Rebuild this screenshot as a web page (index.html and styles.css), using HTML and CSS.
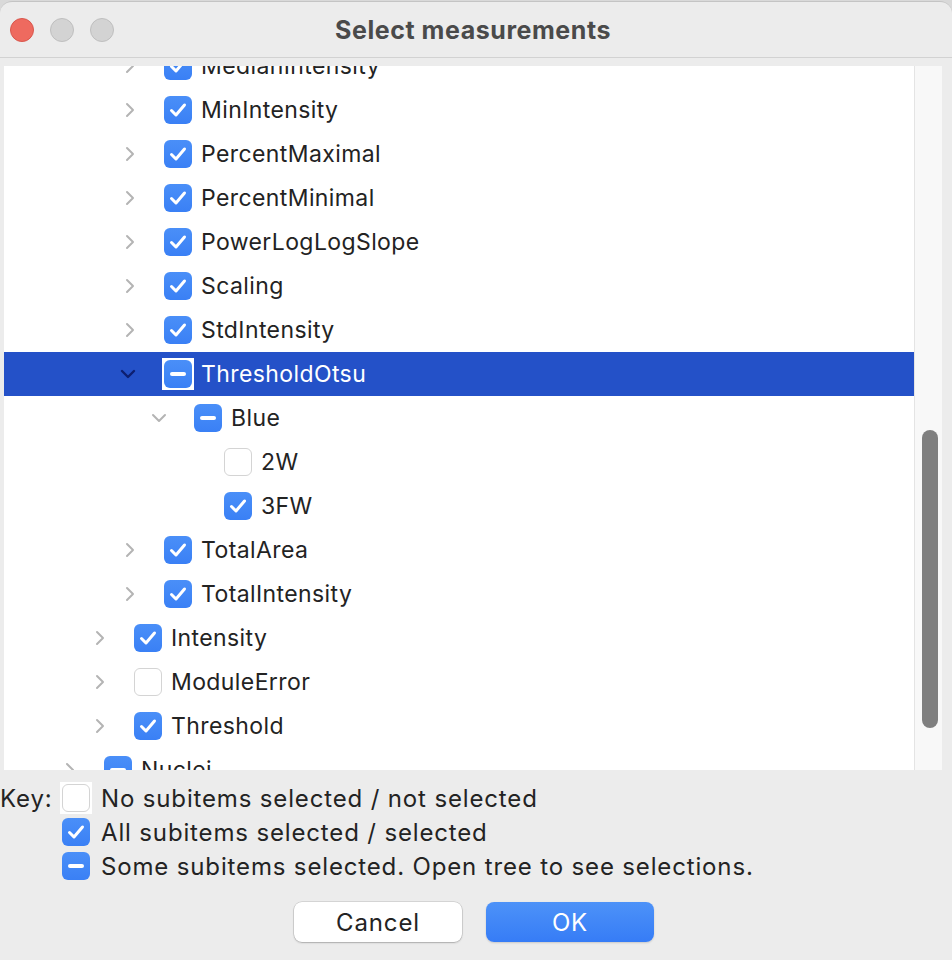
FILE: index.html
```html
<!DOCTYPE html>
<html>
<head>
<meta charset="utf-8">
<link rel="stylesheet" href="styles.css">
<title>Select measurements</title>
</head>
<body>
<div class="window">
  <div class="titlebar">
    <div class="lights">
      <span class="light red"></span>
      <span class="light gray"></span>
      <span class="light gray"></span>
    </div>
    <div class="title">Select measurements</div>
  </div>
  <div class="body">
    <div class="treebox">
      <div class="tree">
        <div class="rows">
          <div class="row l3"><span class="chev"><svg viewBox="0 0 10 16" class="right"><path d="M2 2 L8 8 L2 14"/></svg></span><span class="cb on"><svg viewBox="0 0 28 28"><path d="M7.5 14.5 L12 19 L20.5 9"/></svg></span><span class="label">MedianIntensity</span></div>
          <div class="row l3"><span class="chev"><svg viewBox="0 0 10 16" class="right"><path d="M2 2 L8 8 L2 14"/></svg></span><span class="cb on"><svg viewBox="0 0 28 28"><path d="M7.5 14.5 L12 19 L20.5 9"/></svg></span><span class="label">MinIntensity</span></div>
          <div class="row l3"><span class="chev"><svg viewBox="0 0 10 16" class="right"><path d="M2 2 L8 8 L2 14"/></svg></span><span class="cb on"><svg viewBox="0 0 28 28"><path d="M7.5 14.5 L12 19 L20.5 9"/></svg></span><span class="label">PercentMaximal</span></div>
          <div class="row l3"><span class="chev"><svg viewBox="0 0 10 16" class="right"><path d="M2 2 L8 8 L2 14"/></svg></span><span class="cb on"><svg viewBox="0 0 28 28"><path d="M7.5 14.5 L12 19 L20.5 9"/></svg></span><span class="label">PercentMinimal</span></div>
          <div class="row l3"><span class="chev"><svg viewBox="0 0 10 16" class="right"><path d="M2 2 L8 8 L2 14"/></svg></span><span class="cb on"><svg viewBox="0 0 28 28"><path d="M7.5 14.5 L12 19 L20.5 9"/></svg></span><span class="label">PowerLogLogSlope</span></div>
          <div class="row l3"><span class="chev"><svg viewBox="0 0 10 16" class="right"><path d="M2 2 L8 8 L2 14"/></svg></span><span class="cb on"><svg viewBox="0 0 28 28"><path d="M7.5 14.5 L12 19 L20.5 9"/></svg></span><span class="label">Scaling</span></div>
          <div class="row l3"><span class="chev"><svg viewBox="0 0 10 16" class="right"><path d="M2 2 L8 8 L2 14"/></svg></span><span class="cb on"><svg viewBox="0 0 28 28"><path d="M7.5 14.5 L12 19 L20.5 9"/></svg></span><span class="label">StdIntensity</span></div>
          <div class="row l3 selected"><span class="chev"><svg viewBox="0 0 16 10" class="down"><path d="M2 2 L8 8 L14 2"/></svg></span><span class="cbframe"><span class="cb some"><span class="dash"></span></span></span><span class="label">ThresholdOtsu</span></div>
          <div class="row l4"><span class="chev"><svg viewBox="0 0 16 10" class="down"><path d="M2 2 L8 8 L14 2"/></svg></span><span class="cb some"><span class="dash"></span></span><span class="label">Blue</span></div>
          <div class="row l5"><span class="chev"></span><span class="cb off"></span><span class="label">2W</span></div>
          <div class="row l5"><span class="chev"></span><span class="cb on"><svg viewBox="0 0 28 28"><path d="M7.5 14.5 L12 19 L20.5 9"/></svg></span><span class="label">3FW</span></div>
          <div class="row l3"><span class="chev"><svg viewBox="0 0 10 16" class="right"><path d="M2 2 L8 8 L2 14"/></svg></span><span class="cb on"><svg viewBox="0 0 28 28"><path d="M7.5 14.5 L12 19 L20.5 9"/></svg></span><span class="label">TotalArea</span></div>
          <div class="row l3"><span class="chev"><svg viewBox="0 0 10 16" class="right"><path d="M2 2 L8 8 L2 14"/></svg></span><span class="cb on"><svg viewBox="0 0 28 28"><path d="M7.5 14.5 L12 19 L20.5 9"/></svg></span><span class="label">TotalIntensity</span></div>
          <div class="row l2"><span class="chev"><svg viewBox="0 0 10 16" class="right"><path d="M2 2 L8 8 L2 14"/></svg></span><span class="cb on"><svg viewBox="0 0 28 28"><path d="M7.5 14.5 L12 19 L20.5 9"/></svg></span><span class="label">Intensity</span></div>
          <div class="row l2"><span class="chev"><svg viewBox="0 0 10 16" class="right"><path d="M2 2 L8 8 L2 14"/></svg></span><span class="cb off"></span><span class="label">ModuleError</span></div>
          <div class="row l2"><span class="chev"><svg viewBox="0 0 10 16" class="right"><path d="M2 2 L8 8 L2 14"/></svg></span><span class="cb on"><svg viewBox="0 0 28 28"><path d="M7.5 14.5 L12 19 L20.5 9"/></svg></span><span class="label">Threshold</span></div>
          <div class="row l1"><span class="chev"><svg viewBox="0 0 10 16" class="right"><path d="M2 2 L8 8 L2 14"/></svg></span><span class="cb some"><span class="dash"></span></span><span class="label">Nuclei</span></div>
        </div>
      </div>
      <div class="scrollbar"><div class="thumb"></div></div>
    </div>
    <div class="key">
      <div class="keyrow"><span class="keylabel">Key:</span><span class="cbframe"><span class="cb off"></span></span><span class="keytext">No subitems selected / not selected</span></div>
      <div class="keyrow"><span class="keylabel"></span><span class="cb on"><svg viewBox="0 0 28 28"><path d="M7.5 14.5 L12 19 L20.5 9"/></svg></span><span class="keytext">All subitems selected / selected</span></div>
      <div class="keyrow"><span class="keylabel"></span><span class="cb some"><span class="dash"></span></span><span class="keytext">Some subitems selected. Open tree to see selections.</span></div>
    </div>
    <div class="buttons">
      <button class="btn cancel">Cancel</button>
      <button class="btn ok">OK</button>
    </div>
  </div>
</div>
</body>
</html>
```

FILE: styles.css
```css
* { box-sizing: border-box; }
html, body { margin: 0; padding: 0; }
body {
  width: 952px;
  height: 960px;
  overflow: hidden;
  background: #d9d9d9;
  font-family: "Inter", "Liberation Sans", sans-serif;
}
.window {
  width: 952px;
  height: 959px;
  margin-top: 1px;
  background: #ececec;
  border-radius: 12px 12px 0 0;
  border-top: 1px solid #c4c4c4;
  display: flex;
  flex-direction: column;
  overflow: hidden;
}
.titlebar {
  height: 56px;
  flex: none;
  border-bottom: 1px solid #d2d2d2;
  position: relative;
  display: flex;
  align-items: center;
  justify-content: center;
}
.lights {
  position: absolute;
  left: 10px;
  top: 16px;
  display: flex;
  gap: 16px;
}
.light {
  width: 24px;
  height: 24px;
  border-radius: 50%;
}
.light.red { background: #ee6a5f; border: 1px solid #d9574d; }
.light.gray { background: #d3d3d3; border: 1px solid #bfbfbf; }
.title {
  font-size: 25px;
  font-weight: 700;
  letter-spacing: 0.55px;
  color: #4a4a4a;
  margin-left: -6px;
  margin-top: 1px;
}
.body {
  flex: 1;
  display: flex;
  flex-direction: column;
}
.treebox {
  margin: 8px 10px 0 4px;
  height: 704px;
  flex: none;
  display: flex;
  background: #fff;
}
.tree {
  flex: 1;
  overflow: hidden;
}
.rows {
  margin-top: -22px;
}
.row {
  height: 44px;
  display: flex;
  align-items: center;
  font-size: 23px;
  letter-spacing: 0.4px;
  color: #232323;
}
.row.l1 { padding-left: 50px; }
.row.l2 { padding-left: 80px; }
.row.l3 { padding-left: 110px; }
.row.l4 { padding-left: 140px; }
.row.l5 { padding-left: 170px; }
.chev {
  width: 30px;
  height: 30px;
  margin-right: 20px;
  display: flex;
  align-items: center;
  justify-content: center;
}
.chev svg { fill: none; stroke: #b4b4b4; stroke-width: 2; stroke-linecap: round; stroke-linejoin: round; }
.chev svg.right { width: 10px; height: 16px; margin-left: 2px; }
.chev svg.down { width: 16px; height: 10px; }
.row.selected { background: #2451c8; color: #fff; }
.row.selected .chev svg { stroke: #0d1f70; stroke-width: 2.4; }
.row.selected .chev svg.down { margin-left: -2px; }
.cbframe {
  display: flex;
  padding: 2px;
  margin: -2px;
  background: #fff;
  flex: none;
}
.cb {
  width: 28px;
  height: 28px;
  border-radius: 6px;
  flex: none;
  display: flex;
  align-items: center;
  justify-content: center;
}
.cb.on, .cb.some {
  background: linear-gradient(#4a8ff8, #3a80f5);
}
.cb.off {
  background: #fff;
  border: 1.5px solid #d4d4d4;
}
.cb svg { width: 28px; height: 28px; fill: none; stroke: #fff; stroke-width: 3; stroke-linecap: round; stroke-linejoin: round; }
.dash {
  width: 16px;
  height: 4px;
  border-radius: 2px;
  background: #fff;
}
.label { margin-left: 9px; white-space: nowrap; }
.scrollbar {
  width: 28px;
  flex: none;
  background: #f8f8f8;
  border-left: 1px solid #e4e4e4;
  padding: 364px 0 0 7px;
}
.thumb {
  width: 16px;
  height: 298px;
  border-radius: 8px;
  background: #7f7f7f;
}
.key {
  margin-top: 14px;
  display: flex;
  flex-direction: column;
  gap: 6px;
  font-size: 24px;
  letter-spacing: 0.85px;
  color: #232323;
}
.keyrow {
  display: flex;
  align-items: center;
  height: 28px;
}
.keylabel { width: 62px; padding-left: 0; }
.keytext { margin-left: 11px; white-space: nowrap; }
.buttons {
  margin-top: 22px;
  padding-right: 4px;
  display: flex;
  justify-content: center;
  gap: 24px;
}
.btn {
  width: 168px;
  height: 40px;
  border-radius: 8px;
  font-family: "Inter", "Liberation Sans", sans-serif;
  font-size: 24px;
  letter-spacing: 0.85px;
  border: none;
  padding: 0;
}
.btn.cancel {
  background: #fff;
  color: #232323;
  box-shadow: 0 0 0 0.5px rgba(0,0,0,0.18), 0 1px 2px rgba(0,0,0,0.2);
}
.btn.ok {
  background: linear-gradient(#4d92f8, #367cf6);
  color: #fff;
  box-shadow: 0 1px 2px rgba(0,0,0,0.15);
}
```
